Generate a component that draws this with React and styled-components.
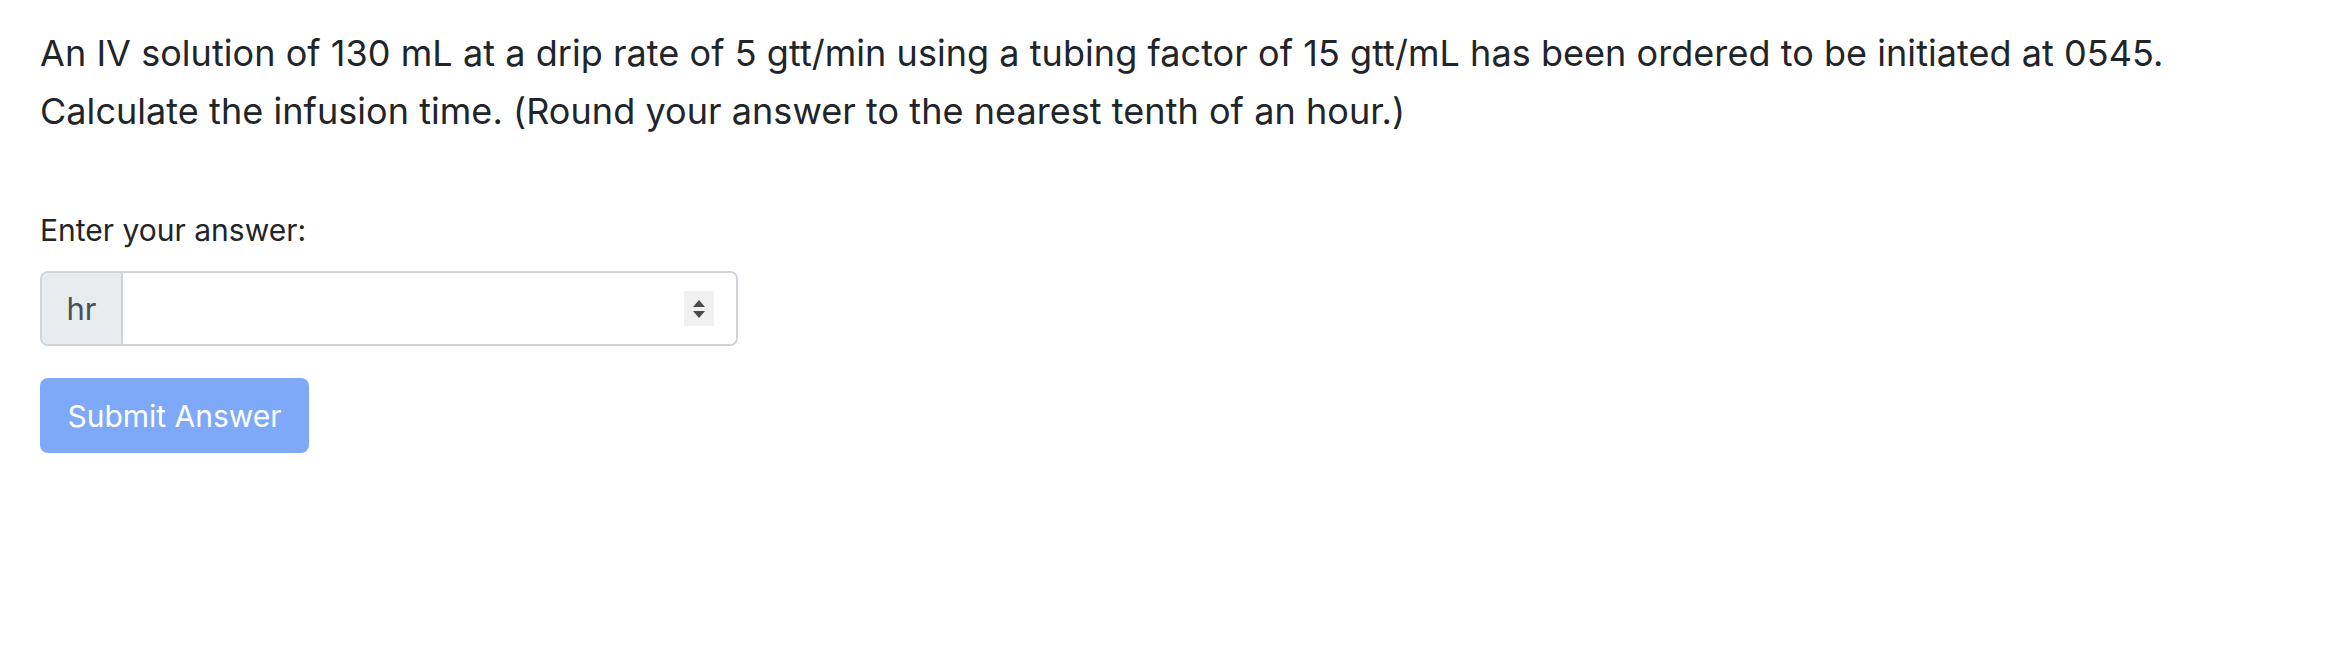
import React from "react";
import styled, { createGlobalStyle } from "styled-components";

const Global = createGlobalStyle`
  html, body { margin: 0; padding: 0; background: #fff; }
  body { font-family: Inter, "Liberation Sans", sans-serif; color: #212529; }
`;

const Page = styled.div`
  padding: 24px 40px 0 40px;
`;

const Question = styled.p`
  margin: 0;
  font-size: 36px;
  line-height: 58px;
  letter-spacing: 0.05px;
`;

const Label = styled.label`
  display: block;
  margin-top: 66px;
  font-size: 30px;
  line-height: 48px;
`;

const InputGroup = styled.div`
  display: flex;
  width: 698px;
  height: 75px;
  margin-top: 17px;
  box-sizing: border-box;
  border: 2px solid #ced4da;
  border-radius: 8px;
  overflow: hidden;
`;

const Addon = styled.span`
  display: flex;
  align-items: center;
  justify-content: center;
  width: 79px;
  background: #e9ecef;
  border-right: 2px solid #ced4da;
  font-size: 31px;
  color: #495057;
`;

const Field = styled.div`
  flex: 1;
  display: flex;
  align-items: center;
  justify-content: flex-end;
  padding-right: 22px;
  background: #fff;
`;

const Spinner = styled.div`
  width: 30px;
  height: 35px;
  background: #f0f0f0;
  display: flex;
  flex-direction: column;
  align-items: center;
  justify-content: center;
  gap: 4px;
`;

const Arrow = styled.div`
  width: 0;
  height: 0;
  border-left: 6px solid transparent;
  border-right: 6px solid transparent;
  ${(p) => (p.$up ? "border-bottom: 7px solid #4a4a4a;" : "border-top: 7px solid #4a4a4a;")}
`;

const Button = styled.button`
  display: block;
  margin-top: 32px;
  width: 269px;
  height: 75px;
  border: none;
  border-radius: 8px;
  background: #7da9f8;
  color: #fff;
  font-family: Inter, "Liberation Sans", sans-serif;
  font-size: 30px;
  padding: 0;
`;

export default function App() {
  return (
    <Page>
      <Global />
      <Question>
        An IV solution of 130 mL at a drip rate of 5 gtt/min using a tubing factor of 15 gtt/mL has been ordered to be initiated at 0545.
        <br />
        Calculate the infusion time. (Round your answer to the nearest tenth of an hour.)
      </Question>
      <Label>Enter your answer:</Label>
      <InputGroup>
        <Addon>hr</Addon>
        <Field>
          <Spinner>
            <Arrow $up />
            <Arrow />
          </Spinner>
        </Field>
      </InputGroup>
      <Button>Submit Answer</Button>
    </Page>
  );
}
